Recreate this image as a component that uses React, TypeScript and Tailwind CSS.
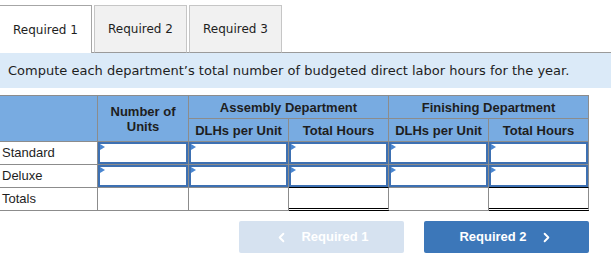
import { ChevronLeft, ChevronRight } from "lucide-react";

const cellBase = "border-r border-b border-[#8c8c8c]";
const head = `${cellBase} bg-[#78abe1] flex items-center justify-center text-center font-bold text-[13px] leading-[15px] text-[#1e1e1e]`;

function InputBox() {
    return (
        <div className="relative h-full w-full border-2 border-[#3d70b2] bg-white">
            {/* little marker in the corner */}
            <span className="absolute left-0 top-0 h-0 w-0 border-l-[5px] border-y-[3px] border-l-[#4a86d0] border-y-transparent" />
        </div>
    );
}

function Row({ label, inputs }: { label: string; inputs: boolean }) {
    return (
        <>
            <div className={`${cellBase} flex items-center pl-[2px] text-[13px] text-[#1e1e1e]`}>{label}</div>
            {[0, 1, 2, 3, 4].map((i) => {
                const isTotalCol = i === 2 || i === 4;
                let extra = "";
                if (inputs && label === "Deluxe" && isTotalCol) extra = " !border-b-black";
                if (!inputs && isTotalCol) extra = " !border-b-[3px] !border-double !border-b-black";
                return (
                    <div key={i} className={`${cellBase}${extra}`}>
                        {inputs && <InputBox />}
                    </div>
                );
            })}
        </>
    );
}

export default function App() {
    return (
        <div className="w-[611px] h-[263px] bg-white overflow-hidden">
            {/* Tabs */}
            <div className="flex items-end h-[53px] pt-[5px] font-['DejaVu_Sans',sans-serif] text-[12px] text-[#1e1e1e]">
                <div className="w-[92px] h-[48px] border-t border-r border-[#a6a6a6] bg-white flex items-center justify-center">
                    Required 1
                </div>
                <div className="w-[2px] h-full border-b border-[#9a9a9a]" />
                <div className="w-[93px] h-[48px] border border-[#c6c6c6] border-b-[#9a9a9a] bg-[#f1f1f1] flex items-center justify-center">
                    Required 2
                </div>
                <div className="w-[2px] h-full border-b border-[#9a9a9a]" />
                <div className="w-[93px] h-[48px] border border-[#c6c6c6] border-b-[#9a9a9a] bg-[#f1f1f1] flex items-center justify-center">
                    Required 3
                </div>
                <div className="flex-1 h-full border-b border-[#9a9a9a]" />
            </div>

            {/* Instruction */}
            <div className="h-[35px] bg-[#dbeaf8] flex items-center pl-[8px] font-['DejaVu_Sans',sans-serif] text-[13px] text-[#1e1e1e]">
                Compute each department’s total number of budgeted direct labor hours for the year.
            </div>

            {/* Table */}
            <div className="mt-[7px] w-[589px] font-['Liberation_Sans',Arial,sans-serif]">
                <div className="grid grid-cols-[98px_91px_100px_100px_100px_100px] grid-rows-[23px_23px_23px_23px_23px] border-t border-[#8c8c8c]">
                    <div className={`${head} row-span-2`} />
                    <div className={`${head} row-span-2`}>
                        Number of
                        <br />
                        Units
                    </div>
                    <div className={`${head} col-span-2`}>Assembly Department</div>
                    <div className={`${head} col-span-2`}>Finishing Department</div>
                    <div className={head}>DLHs per Unit</div>
                    <div className={head}>Total Hours</div>
                    <div className={head}>DLHs per Unit</div>
                    <div className={head}>Total Hours</div>

                    <Row label="Standard" inputs />
                    <Row label="Deluxe" inputs />
                    <Row label="Totals" inputs={false} />
                </div>

                {/* Nav buttons */}
                <div className="mt-[10px] flex justify-end gap-[20px] text-[13px] font-bold text-white">
                    <button className="w-[165px] h-[32px] rounded-[2px] bg-[#d6e2f0] flex items-center justify-center gap-[12px]">
                        <ChevronLeft size={15} strokeWidth={3} />
                        Required 1
                    </button>
                    <button className="w-[165px] h-[32px] rounded-[2px] bg-[#3c77b9] flex items-center justify-center gap-[12px]">
                        Required 2
                        <ChevronRight size={15} strokeWidth={3} />
                    </button>
                </div>
            </div>
        </div>
    );
}
